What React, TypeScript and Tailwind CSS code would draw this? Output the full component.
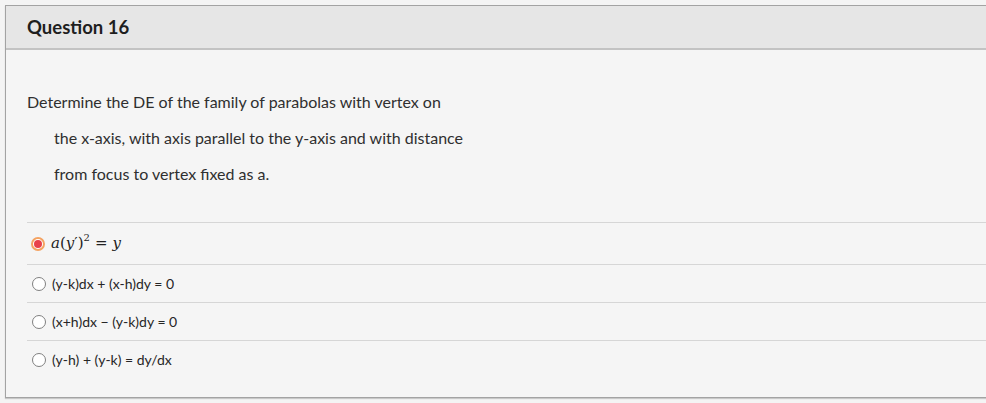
const options = [
  "(y-k)dx + (x-h)dy = 0",
  "(x+h)dx − (y-k)dy = 0",
  "(y-h) + (y-k) = dy/dx",
];

function Radio({ checked }: { checked?: boolean }) {
  if (checked) {
    return (
      <span className="flex h-[14px] w-[14px] shrink-0 items-center justify-center rounded-full border-2 border-[#f4a261] bg-white">
        <span className="h-[8px] w-[8px] rounded-full bg-[#e8414b]" />
      </span>
    );
  }
  return (
    <span className="h-[14px] w-[14px] shrink-0 rounded-full border border-[#808080] bg-white" />
  );
}

export default function App() {
  return (
    <div className="h-[403px] w-[986px] overflow-hidden bg-[#f4f4f4] pl-[5px] pt-[5px] font-['Lato','Open_Sans',sans-serif] text-[#2d3b45]">
      <div className="h-[393px] w-[1000px] border border-[#a3a3a3] bg-[#f5f5f5] shadow-[0_1px_1px_#c8c8c8]">
        <div className="flex h-[44px] items-center border-b-2 border-[#c3c3c3] bg-[#e6e6e6] pl-[21px]">
          <h2 className="pt-[1px] text-[18.5px] font-bold text-[#1e1e1e]">
            Question 16
          </h2>
        </div>

        <div className="pl-[21px] pt-[34px] text-[16px] leading-[36px] text-[#2f2f2f]">
          <p>Determine the DE of the family of parabolas with vertex on</p>
          <p className="pl-[27px]">
            the x-axis, with axis parallel to the y-axis and with distance
          </p>
          <p className="pl-[27px]">from focus to vertex fixed as a.</p>
        </div>

        <div className="ml-[21px] mt-[30px]">
          <div className="flex h-[42px] items-center gap-[6px] border-t border-[#d6d6d6] pl-[4px]">
            <Radio checked />
            <span className="font-['DejaVu_Serif','Liberation_Serif',serif] text-[15px] italic text-[#222]">
              a
              <span className="not-italic">(</span>y
              <span className="not-italic">′</span>
              <span className="not-italic">)</span>
              <sup className="-top-[7px] text-[10px] not-italic">2</sup>
              <span className="px-[5px] not-italic">=</span>y
            </span>
          </div>
          {options.map((o) => (
            <div
              key={o}
              className="flex h-[38px] items-center gap-[6px] border-t border-[#d6d6d6] pl-[5px]"
            >
              <Radio />
              <span className="text-[14px] text-[#262626]">{o}</span>
            </div>
          ))}
        </div>
      </div>
    </div>
  );
}
